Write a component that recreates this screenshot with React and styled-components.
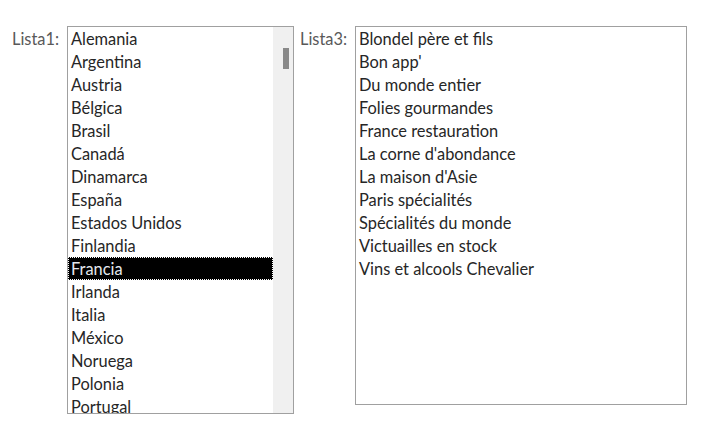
import React from "react";
import styled, { createGlobalStyle } from "styled-components";

const GlobalStyle = createGlobalStyle`
  html, body {
    margin: 0;
    padding: 0;
    background: #ffffff;
  }
  body {
    font-family: "Lato", "Liberation Sans", sans-serif;
  }
`;

const Page = styled.div`
  display: flex;
  align-items: flex-start;
  gap: 6px;
  padding: 26px 0 0 12px;
`;

const Field = styled.div`
  display: flex;
  align-items: flex-start;
`;

const Label = styled.div`
  width: 55px;
  padding-top: 1px;
  font-size: 16.4px;
  line-height: 23px;
  color: #595959;
  white-space: nowrap;
`;

const ListBox = styled.div`
  display: flex;
  width: ${({ $width }) => $width}px;
  height: ${({ $height }) => $height}px;
  border: 1px solid #a0a0a0;
  box-sizing: border-box;
  overflow: hidden;
  background: #ffffff;
`;

const Rows = styled.div`
  flex: 1;
  display: flex;
  flex-direction: column;
  overflow: hidden;
`;

const Row = styled.div`
  flex: 0 0 auto;
  height: 23px;
  line-height: 23px;
  padding-left: 3px;
  box-sizing: border-box;
  font-size: 16.4px;
  white-space: nowrap;
  background: ${({ $selected }) => ($selected ? "#000000" : "transparent")};
  color: ${({ $selected }) => ($selected ? "#e4e8ee" : "#262626")};
  outline: ${({ $selected }) => ($selected ? "1px dotted #ffffff" : "none")};
  outline-offset: -1px;
`;

const ScrollTrack = styled.div`
  flex: 0 0 20px;
  background: #f0f0f0;
  display: flex;
  flex-direction: column;
  align-items: center;
`;

const ScrollThumb = styled.div`
  width: 6px;
  height: 21px;
  margin-top: 21px;
  margin-left: 6px;
  background: #898989;
`;

const countries = [
  "Alemania",
  "Argentina",
  "Austria",
  "Bélgica",
  "Brasil",
  "Canadá",
  "Dinamarca",
  "España",
  "Estados Unidos",
  "Finlandia",
  "Francia",
  "Irlanda",
  "Italia",
  "México",
  "Noruega",
  "Polonia",
  "Portugal",
];

const customers = [
  "Blondel père et fils",
  "Bon app'",
  "Du monde entier",
  "Folies gourmandes",
  "France restauration",
  "La corne d'abondance",
  "La maison d'Asie",
  "Paris spécialités",
  "Spécialités du monde",
  "Victuailles en stock",
  "Vins et alcools Chevalier",
];

export default function App() {
  return (
    <>
      <GlobalStyle />
      <Page>
        <Field>
          <Label>Lista1:</Label>
          <ListBox $width={227} $height={388}>
            <Rows>
              {countries.map((c) => (
                <Row key={c} $selected={c === "Francia"}>
                  {c}
                </Row>
              ))}
            </Rows>
            <ScrollTrack>
              <ScrollThumb />
            </ScrollTrack>
          </ListBox>
        </Field>
        <Field>
          <Label>Lista3:</Label>
          <ListBox $width={332} $height={379}>
            <Rows>
              {customers.map((c) => (
                <Row key={c}>{c}</Row>
              ))}
            </Rows>
          </ListBox>
        </Field>
      </Page>
    </>
  );
}
